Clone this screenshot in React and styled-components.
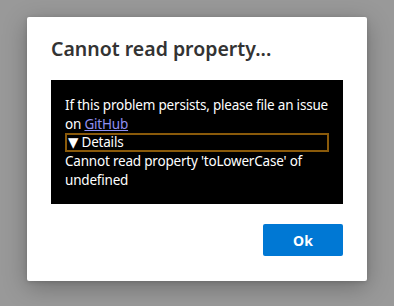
import styled, { createGlobalStyle } from "styled-components";

const GlobalStyle = createGlobalStyle`
  html, body {
    margin: 0;
    padding: 0;
    background: #999999;
  }
`;

const App = () => {
  return (
    <>
      <GlobalStyle />
      <Overlay>
        <Dialog>
          <Title>Cannot read property...</Title>
          <ErrorBox>
            <Line>
              If this problem persists, please file an issue
              <br />
              on <Link href="#">GitHub</Link>
            </Line>
            <Summary>▼ Details</Summary>
            <Line>Cannot read property 'toLowerCase' of undefined</Line>
          </ErrorBox>
          <Footer>
            <OkButton>Ok</OkButton>
          </Footer>
        </Dialog>
      </Overlay>
    </>
  );
};

export default App;

const Overlay = styled.div`
  width: 394px;
  height: 306px;
  display: flex;
  justify-content: center;
  align-items: flex-start;
  padding-top: 17px;
  box-sizing: border-box;
  background: #999999;
  font-family: "Noto Sans", "DejaVu Sans", sans-serif;
`;

const Dialog = styled.div`
  width: 340px;
  height: 264px;
  box-sizing: border-box;
  padding: 18px 24px 24px;
  background: #ffffff;
  border-radius: 2px;
  box-shadow: 0 6px 24px rgba(0, 0, 0, 0.28), 0 1px 4px rgba(0, 0, 0, 0.15);
  display: flex;
  flex-direction: column;
`;

const Title = styled.h1`
  margin: 0 0 17px;
  font-size: 19.5px;
  line-height: 28px;
  font-weight: 600;
  color: #333333;
`;

const ErrorBox = styled.div`
  background: #000000;
  color: #ffffff;
  padding: 16px 14px 14px;
  font-size: 13.5px;
  line-height: 19px;
  letter-spacing: -0.2px;
`;

const Line = styled.div``;

const Link = styled.a`
  color: #8f8ff0;
  text-decoration: underline;
`;

const Summary = styled.div`
  border: 2px solid #8a5a0a;
  height: 15px;
  line-height: 15px;
  margin-top: -1px;
  padding-left: 1px;
`;

const Footer = styled.div`
  margin-top: 20px;
  display: flex;
  justify-content: flex-end;
`;

const OkButton = styled.button`
  width: 80px;
  height: 32px;
  border: none;
  border-radius: 2px;
  background: #0078d4;
  color: #ffffff;
  font-family: "Noto Sans", "DejaVu Sans", sans-serif;
  font-size: 14px;
  font-weight: 700;
  cursor: pointer;
`;
